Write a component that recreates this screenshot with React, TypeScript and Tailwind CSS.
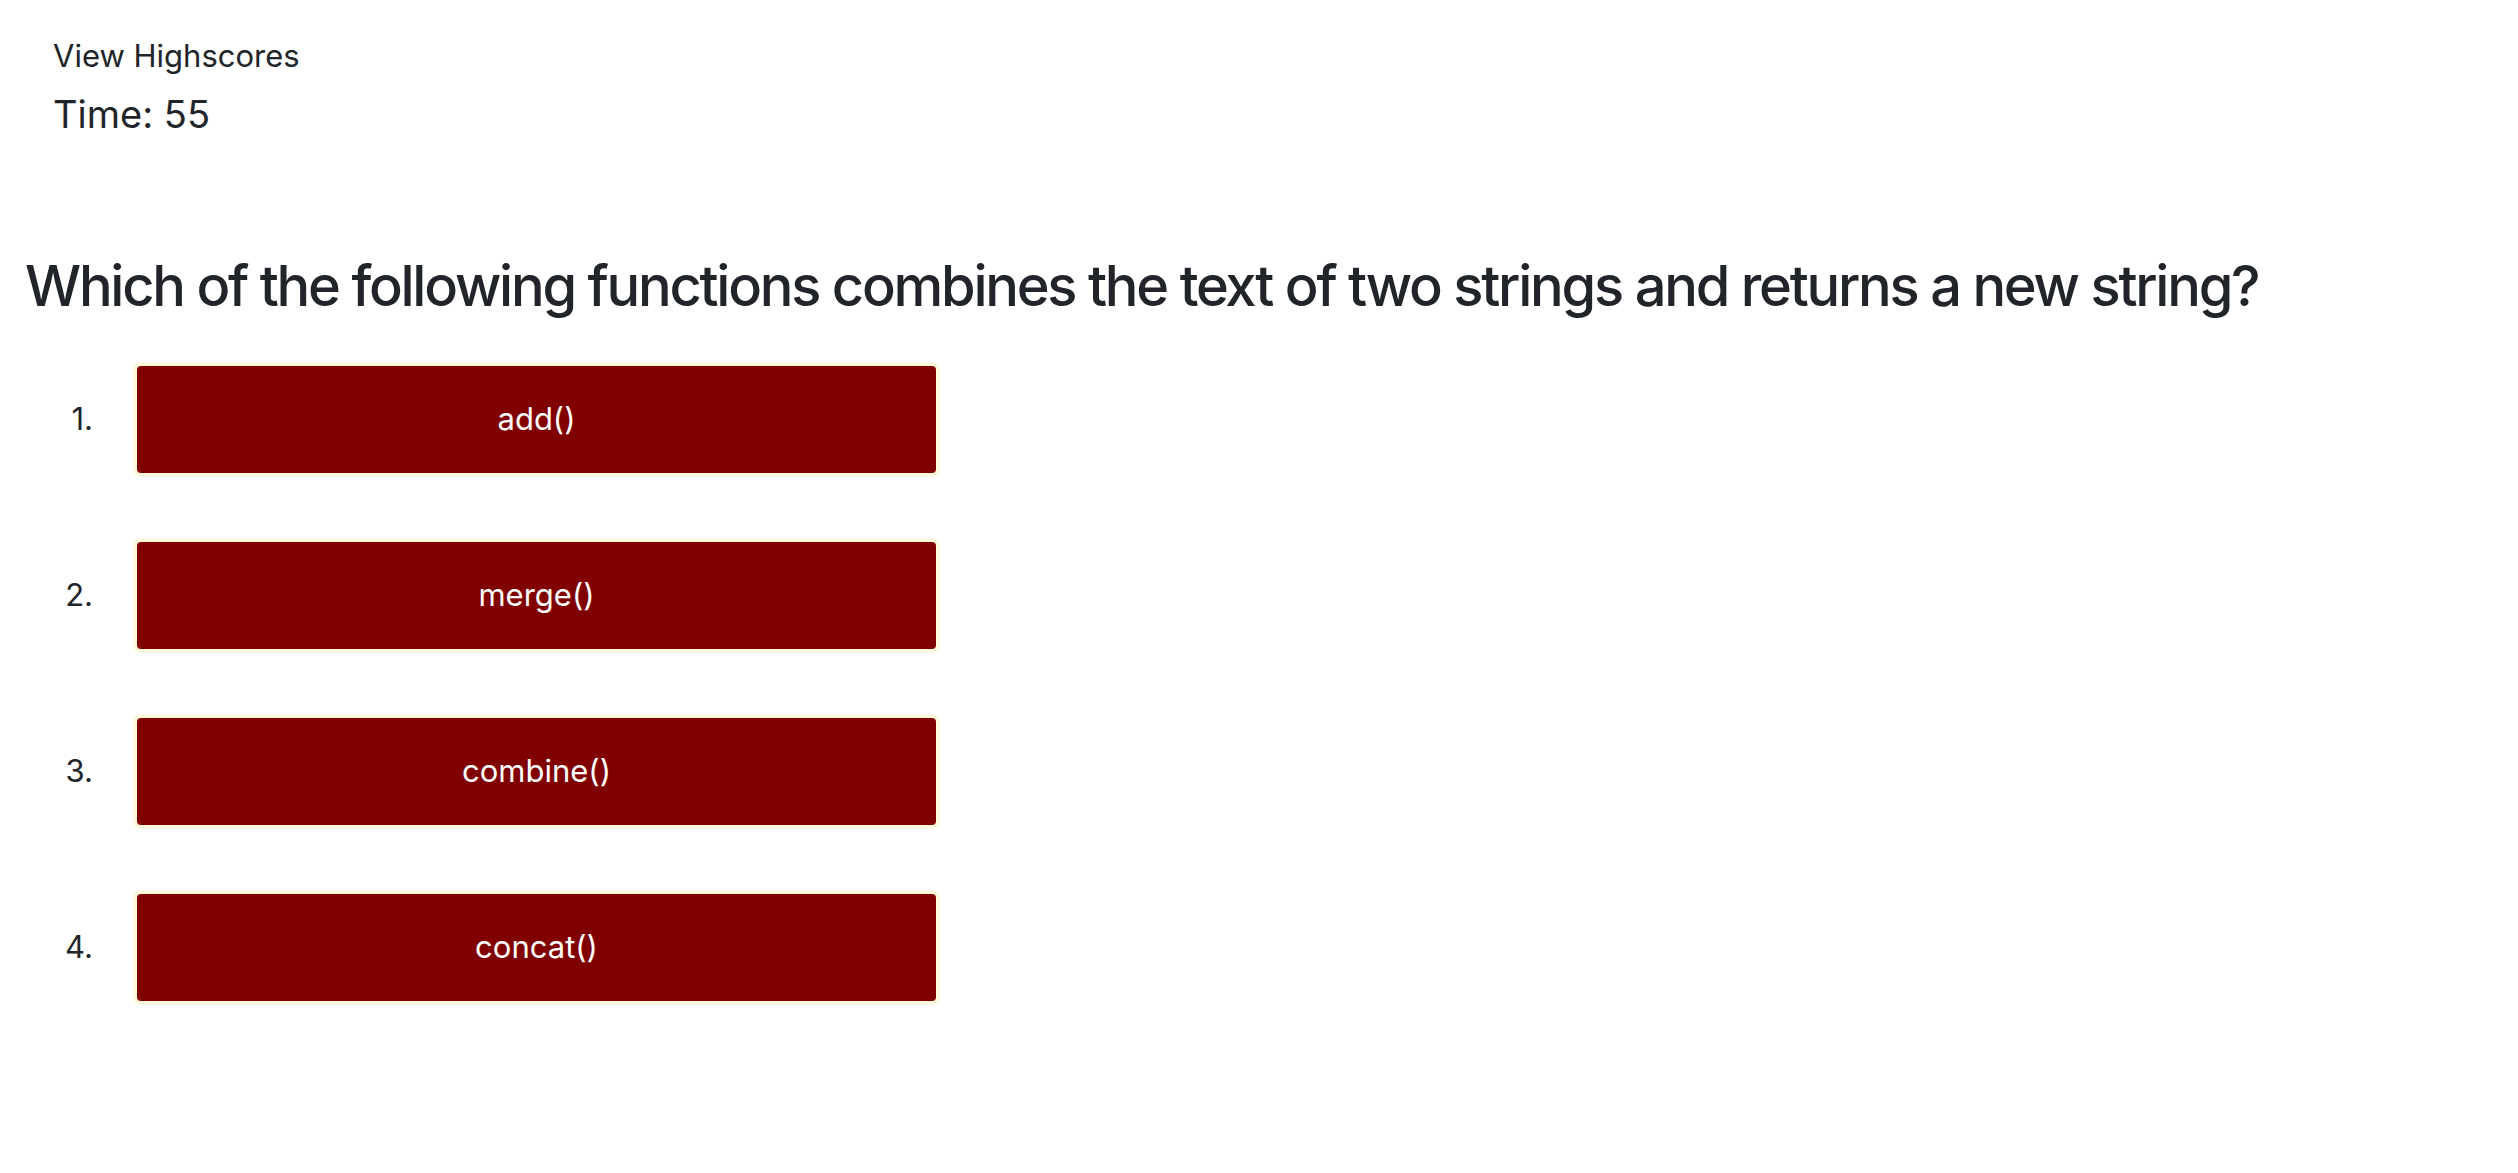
import React from 'react'

const ANSWERS = ['add()', 'merge()', 'combine()', 'concat()']

export default function App() {
  return (
    <div className="min-h-screen bg-white text-[#212529] font-['Inter','Noto_Sans',sans-serif]">
      {/* Header */}
      <header className="pl-[53px] pt-[37px]">
        <a className="block text-[31px] leading-[1.2] cursor-pointer">View Highscores</a>
        <p className="mt-[18px] text-[38px] leading-[1.2]">Time: 55</p>
      </header>

      {/* Question */}
      <main className="pl-[25px] pt-[115px]">
        <h1 className="text-[56px] font-medium leading-[1.2] tracking-[-0.04em]">
          Which of the following functions combines the text of two strings and returns a new string?
        </h1>
        <ol className="mt-[42px] flex flex-col gap-[61px]">
          {ANSWERS.map((a, i) => (
            <li key={i} className="flex items-center">
              <span className="w-[68px] text-right text-[31px]">{i + 1}.</span>
              <button className="ml-[40px] w-[807px] h-[115px] rounded-[8px] border-[4px] border-[#fff8dc] bg-[#800000] text-white text-[31px]">
                {a}
              </button>
            </li>
          ))}
        </ol>
      </main>
    </div>
  )
}
